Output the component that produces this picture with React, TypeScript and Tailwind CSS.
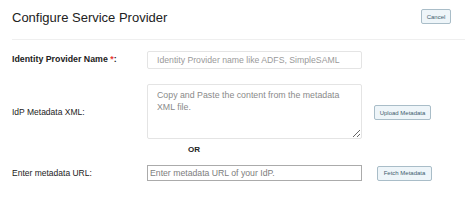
const FONT = "font-['Liberation_Sans',Arial,sans-serif]";

function SmallButton({ label, className = '' }: { label: string; className?: string }) {
  return (
    <button
      type="button"
      className={`h-[15px] flex items-center justify-center bg-[#eef5f9] border border-[#a9bdc8] rounded-[2px] text-[6px] leading-none text-[#3f5d6e] ${className}`}
    >
      {label}
    </button>
  );
}

export default function App() {
  return (
    <div className={`${FONT} w-[474px] h-[216px] bg-white text-[#222]`}>
      {/* Header */}
      <div className="ml-3 mr-[9px] h-[40px] pt-[9px] pr-[14px] flex items-start justify-between border-b border-[#efefef]">
        <h1 className="mt-[1px] text-[13px] leading-[15px] font-normal text-[#222]">
          Configure Service Provider
        </h1>
        <SmallButton label="Cancel" className="w-[30px]" />
      </div>

      <div className="pl-3">
        {/* IdP name */}
        <div className="mt-[11px] flex items-center h-[18px]">
          <label className="w-[135px] text-[8.8px] font-bold">
            Identity Provider Name <span className="text-[#e53935]">*</span>:
          </label>
          <input
            type="text"
            placeholder="Identity Provider name like ADFS, SimpleSAML"
            className="w-[215px] h-[18px] px-[9px] text-[8.7px] border border-[#e4e4e4] rounded-[2px] outline-none placeholder:text-[#9a9a9a]"
          />
        </div>

        {/* Metadata XML */}
        <div className="mt-[15px] flex items-center">
          <label className="w-[135px] text-[8.5px] mt-[2px]">IdP Metadata XML:</label>
          <textarea
            placeholder="Copy and Paste the content from the metadata XML file."
            className="w-[215px] h-[55px] px-[9px] pt-[4px] text-[8.8px] leading-[12px] border border-[#e4e4e4] rounded-[2px] outline-none placeholder:text-[#8a8a8a]"
          />
          <SmallButton label="Upload Metadata" className="ml-[12px] mt-[2px] w-[57px]" />
        </div>

        {/* OR */}
        <div className="mt-[6px] pl-[176px] h-[10px] text-[8px] leading-[10px] font-bold">OR</div>

        {/* Metadata URL */}
        <div className="mt-[10px] flex items-center">
          <label className="w-[135px] text-[8.5px]">Enter metadata URL:</label>
          <input
            type="text"
            placeholder="Enter metadata URL of your IdP."
            className="w-[215px] h-[16px] px-[2px] text-[8.7px] border border-[#ababab] outline-none placeholder:text-[#7d7d7d]"
          />
          <SmallButton label="Fetch Metadata" className="ml-[15px] w-[55px]" />
        </div>
      </div>
    </div>
  );
}
